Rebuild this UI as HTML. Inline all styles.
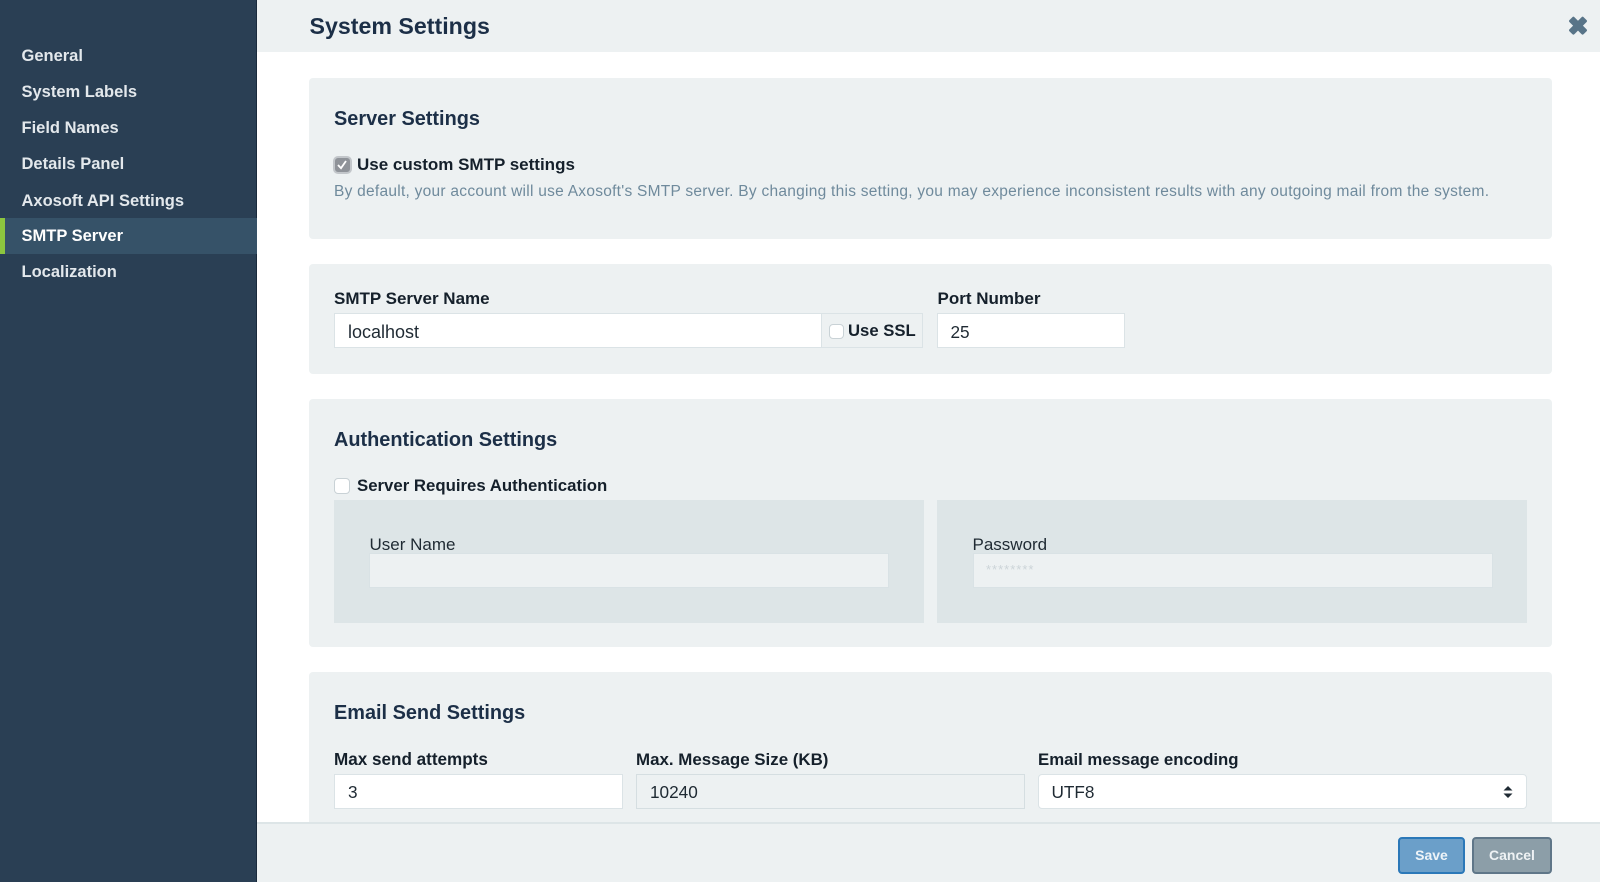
<!DOCTYPE html>
<html><head><meta charset="utf-8"><title>System Settings</title>
<style>
html,body{margin:0;padding:0;width:1600px;height:882px;overflow:hidden;background:#fff;font-family:"Liberation Sans",Arial,sans-serif}
#r div,#r span.t{position:absolute;box-sizing:border-box;white-space:nowrap}
.t{position:absolute;white-space:nowrap;line-height:20px;height:20px}
.nav{left:21.500px;font-size:16.500px;font-weight:bold;color:#e3e8ec}
.h{font-size:19.900px;font-weight:bold;color:#1c2f47;left:334px;line-height:26px;height:26px}
.l{font-size:16.900px;font-weight:bold;color:#15202b}
.v{font-size:17.200px;color:#1f2a33}
.p{background:#edf1f2;border-radius:4px;left:309px;width:1243px}
.i{background:#fff;border:1px solid #dbe3e6}
.cb{background:#fff;border:1px solid #c9d2d6;border-radius:4px}
.g{background:#dde5e7}
</style></head><body>
<div id="r" style="position:relative;width:1600px;height:882px;overflow:hidden">
<div style="left:257px;top:0;width:1343px;height:52px;background:#edf1f2"></div>
<div style="left:0;top:0;width:257px;height:882px;background:#2a3f54;border-right:1px solid #1a2a3c"></div>
<div style="left:0;top:218px;width:257px;height:36px;background:#365268"></div>
<div style="left:0;top:218px;width:5px;height:36px;background:#8cc63f"></div>
<span class="t nav" style="top:46px">General</span>
<span class="t nav" style="top:82px">System Labels</span>
<span class="t nav" style="top:118px">Field Names</span>
<span class="t nav" style="top:154px">Details Panel</span>
<span class="t nav" style="top:191px">Axosoft API Settings</span>
<span class="t nav" style="top:226px;color:#fff">SMTP Server</span>
<span class="t nav" style="top:262px">Localization</span>

<span class="t" style="left:309.500px;top:13px;font-size:23.200px;font-weight:bold;color:#1c2f47;line-height:26px;height:26px">System Settings</span>
<svg style="position:absolute;left:1567px;top:15px" width="22" height="22" viewBox="0 0 22 22"><g transform="translate(11 10.700) rotate(45)" fill="#587488"><rect x="-10" y="-3.500" width="20" height="7" rx="1.500"/><rect x="-3.500" y="-10" width="7" height="20" rx="1.500"/></g></svg>

<div class="p" style="top:78px;height:161px"></div>
<span class="t h" style="top:105.500px">Server Settings</span>
<div style="left:332.500px;top:155.500px;width:19px;height:18px;background:#8f9399;border:2px solid #c2c6ca;border-radius:5px"></div>
<svg style="position:absolute;left:333px;top:156px" width="18" height="17" viewBox="0 0 18 17"><path d="M5 9l3 3.200L13 5" fill="none" stroke="#fff" stroke-width="1.800"/></svg>
<span class="t l" style="left:357px;top:155px;font-size:17px">Use custom SMTP settings</span>
<span class="t" style="left:334px;top:181.500px;font-size:15.500px;color:#6f8a9c;letter-spacing:.26px">By default, your account will use Axosoft's SMTP server. By changing this setting, you may experience inconsistent results with any outgoing mail from the system.</span>

<div class="p" style="top:264px;height:110px"></div>
<span class="t l" style="left:334px;top:289px;font-size:17px">SMTP Server Name</span>
<span class="t l" style="left:937.500px;top:289px;font-size:17px">Port Number</span>
<div class="i" style="left:334px;top:313px;width:488px;height:35px"></div>
<div style="left:821px;top:313px;width:102px;height:35px;background:#edf1f2;border:1px solid #dbe3e6"></div>
<div class="cb" style="left:828.500px;top:323.500px;width:15.500px;height:15.500px"></div>
<span class="t l" style="left:848px;top:321px;font-size:16.700px">Use SSL</span>
<div class="i" style="left:937px;top:313px;width:188px;height:35px"></div>
<span class="t v" style="left:348px;top:321.500px;font-size:18px">localhost</span>
<span class="t v" style="left:950.500px;top:321.500px">25</span>

<div class="p" style="top:399px;height:248px"></div>
<span class="t h" style="top:427px">Authentication Settings</span>
<div class="cb" style="left:334px;top:478px;width:16px;height:16px"></div>
<span class="t l" style="left:357px;top:476px;font-size:16.800px">Server Requires Authentication</span>
<div class="g" style="left:334px;top:500px;width:590px;height:123px"></div>
<div class="g" style="left:937px;top:500px;width:590px;height:123px"></div>
<span class="t" style="left:369.500px;top:535px;font-size:17px;color:#1f2a33">User Name</span>
<span class="t" style="left:972.500px;top:535px;font-size:17px;color:#1f2a33">Password</span>
<div style="left:369px;top:553px;width:520px;height:35px;background:#edf1f2;border:1px solid #d9e2e5"></div>
<div style="left:972.500px;top:553px;width:520px;height:35px;background:#edf1f2;border:1px solid #d9e2e5"></div>
<span class="t" style="left:986px;top:560px;font-size:13px;color:#ccd4d8;letter-spacing:1px">********</span>

<div class="p" style="top:672px;height:160px"></div>
<span class="t h" style="top:700px">Email Send Settings</span>
<span class="t l" style="left:334px;top:750px;font-size:17.100px">Max send attempts</span>
<span class="t l" style="left:636px;top:750px">Max. Message Size (KB)</span>
<span class="t l" style="left:1038px;top:750px;font-size:16.800px">Email message encoding</span>
<div class="i" style="left:334px;top:774px;width:289px;height:35px"></div>
<div style="left:636px;top:774px;width:389px;height:35px;background:#edf1f2;border:1px solid #d5dee1"></div>
<div class="i" style="left:1038px;top:774px;width:489px;height:35px;border-radius:4px"></div>
<span class="t v" style="left:348px;top:781.500px">3</span>
<span class="t v" style="left:650px;top:781.500px">10240</span>
<span class="t v" style="left:1051.500px;top:781.500px">UTF8</span>
<svg style="position:absolute;left:1503px;top:785px" width="10" height="14" viewBox="0 0 10 14"><path d="M5 1L9.500 5.500H.5zM5 13L.5 8.500H9.500z" fill="#1f2a33"/></svg>

<div style="left:257px;top:822px;width:1343px;height:60px;background:#edf1f2;border-top:2px solid #dde5e7"></div>
<div style="left:1398px;top:837px;width:67px;height:37px;background:#6b9fc9;border:2px solid #2b78b8;border-radius:4px;color:#eef4f8;font-size:14px;font-weight:bold;text-align:center;line-height:33px">Save</div>
<div style="left:1472px;top:837px;width:80px;height:37px;background:#8c9ea8;border:2px solid #5f7688;border-radius:4px;color:#eef2f4;font-size:14px;font-weight:bold;text-align:center;line-height:33px">Cancel</div>
</div>
</body></html>
